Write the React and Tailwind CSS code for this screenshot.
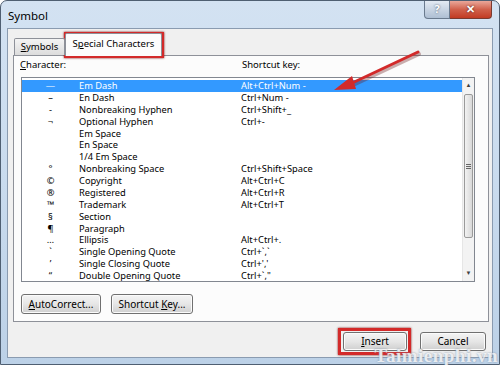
import React from 'react'

const rows = [
    { sym: '—', name: 'Em Dash', key: 'Alt+Ctrl+Num -' },
    { sym: '–', name: 'En Dash', key: 'Ctrl+Num -' },
    { sym: '-', name: 'Nonbreaking Hyphen', key: 'Ctrl+Shift+_' },
    { sym: '¬', name: 'Optional Hyphen', key: 'Ctrl+-' },
    { sym: '', name: 'Em Space', key: '' },
    { sym: '', name: 'En Space', key: '' },
    { sym: '', name: '1/4 Em Space', key: '' },
    { sym: '°', name: 'Nonbreaking Space', key: 'Ctrl+Shift+Space' },
    { sym: '©', name: 'Copyright', key: 'Alt+Ctrl+C' },
    { sym: '®', name: 'Registered', key: 'Alt+Ctrl+R' },
    { sym: '™', name: 'Trademark', key: 'Alt+Ctrl+T' },
    { sym: '§', name: 'Section', key: '' },
    { sym: '¶', name: 'Paragraph', key: '' },
    { sym: '…', name: 'Ellipsis', key: 'Alt+Ctrl+.' },
    { sym: '`', name: 'Single Opening Quote', key: 'Ctrl+`,`' },
    { sym: '’', name: 'Single Closing Quote', key: "Ctrl+','" },
    { sym: '“', name: 'Double Opening Quote', key: 'Ctrl+`,"' }
]

function WinButton({ children, className = '' }) {
    return (
        <div className={`flex items-center justify-center rounded-[3px] border border-[#707070] bg-gradient-to-b from-[#f4f4f4] via-[#e6e6e6] to-[#cfcfcf] text-[10px] text-black shadow-[inset_0_0_0_1px_#fbfbfb] ${className}`}>
            {children}
        </div>
    )
}

export default function App() {
    return (
        <div className="relative w-[500px] h-[365px] overflow-hidden bg-white" style={{ fontFamily: '"Noto Sans", "Open Sans", sans-serif' }}>
            <div className="flex flex-col w-[500px] h-[365px] rounded-t-[7px] border border-[#4f5f72] bg-gradient-to-b from-[#d3e2f2] via-[#c9dbee] to-[#bcd1e7]">
                {/* title bar */}
                <div className="flex h-[27px] items-start">
                    <div className="pl-[7px] pt-[6px] text-[11.5px] text-black">Symbol</div>
                    <div className="ml-auto mr-[7px] flex">
                        <div className="flex h-[18px] w-[26px] items-center justify-center rounded-bl-[4px] border border-t-0 border-[#6a7a8e] bg-gradient-to-b from-[#e3eaf3] to-[#aebfd3] text-[11px] font-bold text-white [text-shadow:0_0_2px_#3a4a5e]">?</div>
                        <div className="flex h-[18px] w-[42px] items-center justify-center rounded-br-[4px] border border-l-0 border-t-0 border-[#7a3a30] bg-gradient-to-b from-[#e9a79a] via-[#d0604b] to-[#c23a22] text-[11px] font-bold text-white [text-shadow:0_0_2px_#4a1208]">✕</div>
                    </div>
                </div>

                {/* client area */}
                <div className="mx-[6px] flex h-[330px] flex-col border border-[#8a9bb0] bg-[#f0f0f0]">
                    <div className="pl-[5px] pt-[4px]">
                        {/* tabs */}
                        <div className="relative z-10 flex h-[22px] items-end pl-[1px]">
                            <div className="flex h-[17px] w-[51px] items-center justify-center rounded-t-[2px] border border-b-0 border-[#8e9199] bg-gradient-to-b from-[#f4f4f4] to-[#dcdcdc] text-[9.5px]">
                                <span><span className="underline">S</span>ymbols</span>
                            </div>
                            <div className="-mb-[1px] flex h-[23px] w-[97px] items-center justify-center rounded-t-[2px] border border-b-0 border-[#8e9199] bg-[#fcfcfc] pb-[1px] text-[9.5px]">
                                <span>S<span className="underline">p</span>ecial Characters</span>
                            </div>
                        </div>
                        {/* panel */}
                        <div className="h-[267px] w-[476px] border border-[#8e9199] bg-[#fcfcfc]">
                            <div className="flex h-[15px] items-end pl-[6px] text-[9.5px] leading-[12px]">
                                <div className="w-[222px]"><span className="underline">C</span>haracter:</div>
                                <div>Shortcut key:</div>
                            </div>
                            <div className="ml-[7px] mt-[6px] flex h-[205px] w-[454px] border border-[#828790] bg-white">
                                <div className="flex-1 pt-[2px] text-[9.3px]">
                                    {rows.map((r, i) => (
                                        <div key={r.name} className={`flex h-[11.875px] items-center leading-[11.875px] ${i === 0 ? 'bg-[#3399ff] text-white' : 'text-black'}`}>
                                            <div className="w-[57px] text-center">{r.sym}</div>
                                            <div className="w-[162px]">{r.name}</div>
                                            <div>{r.key}</div>
                                        </div>
                                    ))}
                                </div>
                                <div className="flex w-[12px] flex-col bg-[#f3f3f3] border-l border-[#e6e6e6]">
                                    <div className="flex h-[15px] items-center justify-center text-[6px] text-[#404040]">▲</div>
                                    <div className="mx-[1px] mt-[1px] flex h-[144px] items-center justify-center rounded-[2px] border border-[#9a9a9a] bg-gradient-to-r from-[#f2f2f2] to-[#d8d8d8]">
                                        <div className="flex flex-col gap-[1px]">
                                            <div className="h-[1px] w-[5px] bg-[#666]"></div>
                                            <div className="h-[1px] w-[5px] bg-[#666]"></div>
                                            <div className="h-[1px] w-[5px] bg-[#666]"></div>
                                        </div>
                                    </div>
                                    <div className="mt-auto flex h-[15px] items-center justify-center text-[6px] text-[#404040]">▼</div>
                                </div>
                            </div>
                            <div className="ml-[7px] mt-[12px] flex gap-[10px]">
                                <WinButton className="h-[20px] w-[80px]"><span><span className="underline">A</span>utoCorrect...</span></WinButton>
                                <WinButton className="h-[20px] w-[82px]"><span>Shortcut <span className="underline">K</span>ey...</span></WinButton>
                            </div>
                        </div>
                    </div>
                    {/* bottom buttons */}
                    <div className="mt-[10px] flex justify-end gap-[13px] pr-[6px]">
                        <WinButton className="h-[19px] w-[64px] border-[#3c7fb1]"><span><span className="underline">I</span>nsert</span></WinButton>
                        <WinButton className="h-[19px] w-[66px]">Cancel</WinButton>
                    </div>
                </div>
            </div>

            {/* annotation overlays */}
            <div className="absolute left-[64px] top-[32px] h-[26px] w-[100px] border-[3px] border-[#d32a2a] shadow-[0_0_2px_#7a1010]"></div>
            <div className="absolute left-[338px] top-[328px] h-[27px] w-[73px] border-[3px] border-[#d32a2a] shadow-[0_0_2px_#7a1010]"></div>
            <svg className="absolute left-0 top-0" width="500" height="365" viewBox="0 0 500 365">
                <line x1="418" y1="52" x2="350" y2="84" stroke="#6b1a1a" strokeOpacity="0.35" strokeWidth="4" strokeLinecap="round" transform="translate(1,2)" />
                <line x1="418" y1="52" x2="350" y2="84" stroke="#d22a2a" strokeWidth="3" strokeLinecap="round" />
                <polygon points="334,90 352,76 356,89" fill="#d22a2a" />
            </svg>
            <div className="absolute right-[2px] top-[342px] text-[19px] font-bold tracking-[0.5px] text-white/80 [text-shadow:0_0_2px_#7a8aa0]" style={{ fontFamily: '"Liberation Serif", serif' }}>Taimienphi.vn</div>
        </div>
    )
}
